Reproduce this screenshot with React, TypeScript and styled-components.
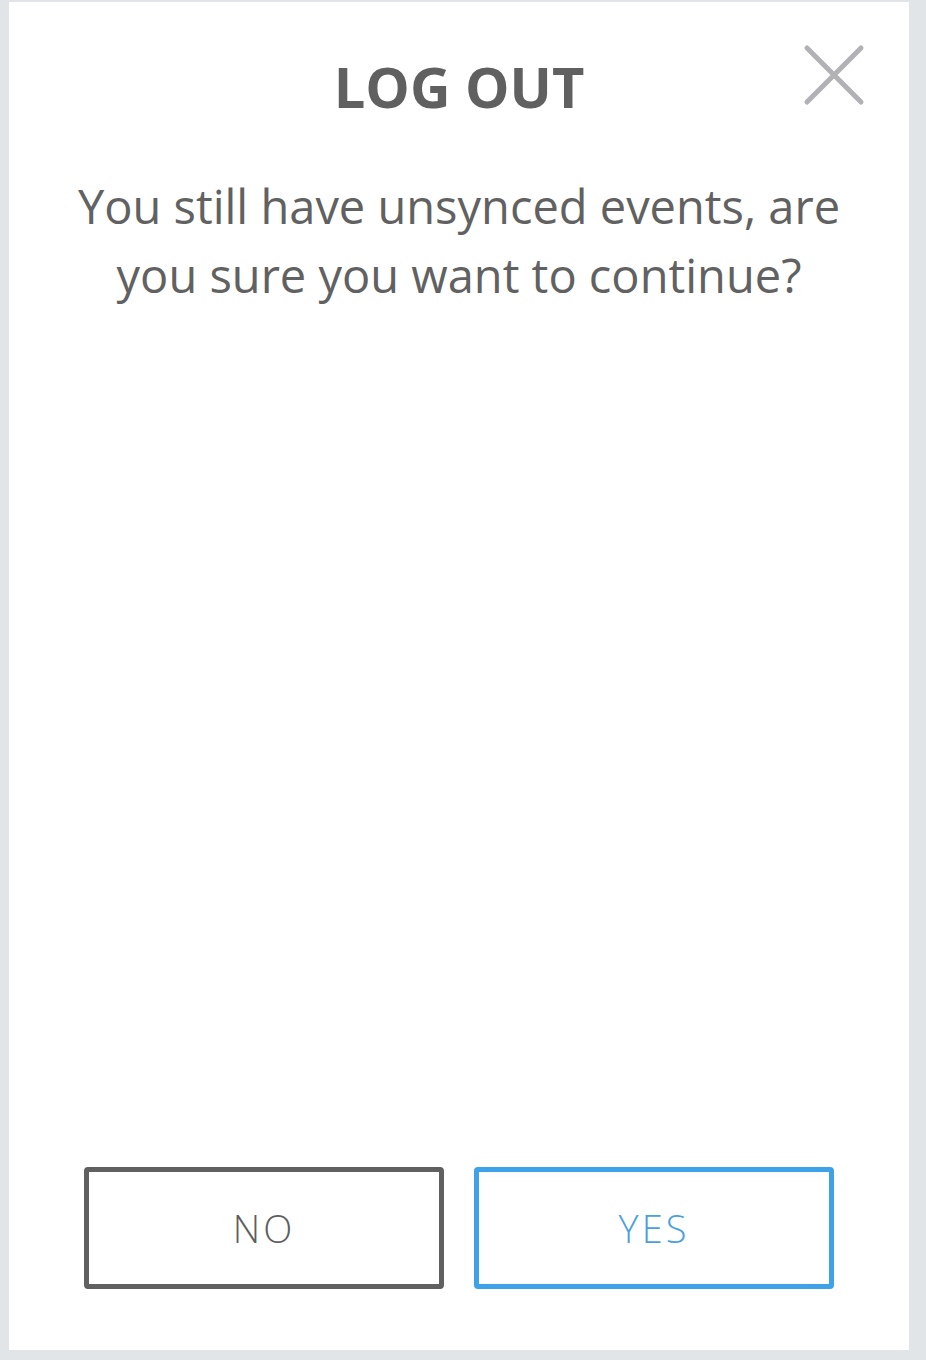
import React from "react";
import styled, { createGlobalStyle } from "styled-components";

const Global = createGlobalStyle`
  html, body { margin: 0; padding: 0; background: #e2e5e8; }
  body { font-family: "Open Sans", "Noto Sans", sans-serif; }
`;

const Screen = styled.div`
  width: 926px;
  height: 1360px;
  box-sizing: border-box;
  padding: 2px 17px 10px 9px;
  display: flex;
`;

const Panel = styled.div`
  flex: 1;
  background: #ffffff;
  display: flex;
  flex-direction: column;
  position: relative;
`;

const Header = styled.div`
  height: 170px;
  display: flex;
  justify-content: center;
  align-items: flex-start;
  padding-top: 46px;
  box-sizing: border-box;
`;

const Title = styled.h1`
  margin: 0;
  font-size: 56px;
  font-weight: 700;
  color: #606060;
  line-height: 76px;
`;

const Close = styled.button`
  position: absolute;
  top: 41px;
  right: 43px;
  width: 64px;
  height: 64px;
  padding: 0;
  border: none;
  background: transparent;
  display: flex;
  align-items: center;
  justify-content: center;
`;

const Message = styled.p`
  margin: 0;
  flex: 1;
  padding: 0 36px;
  text-align: center;
  font-size: 47px;
  line-height: 69px;
  color: #616161;
`;

const Actions = styled.div`
  display: grid;
  grid-template-columns: 1fr 1fr;
  gap: 30px;
  padding: 0 75px 61px;
`;

const ActionButton = styled.button<{ $primary?: boolean }>`
  height: 122px;
  box-sizing: border-box;
  background: #fff;
  border: 5px solid ${(p) => (p.$primary ? "#3ea2e8" : "#606060")};
  border-radius: 4px;
  color: ${(p) => (p.$primary ? "#4a9fe0" : "#5e5e5e")};
  font-family: "Open Sans", sans-serif;
  font-size: 38px;
  font-weight: 300;
  letter-spacing: 3px;
  padding: 0;
`;

export default function App() {
  return (
    <>
      <Global />
      <Screen>
        <Panel>
          <Header>
            <Title>LOG OUT</Title>
          </Header>
          <Close aria-label="Close">
            <svg width="64" height="64" viewBox="0 0 64 64">
              <path
                d="M5 5 L59 59 M59 5 L5 59"
                stroke="#b1b1b6"
                strokeWidth="5"
                strokeLinecap="round"
              />
            </svg>
          </Close>
          <Message>
            You still have unsynced events, are you sure you want to continue?
          </Message>
          <Actions>
            <ActionButton>NO</ActionButton>
            <ActionButton $primary>YES</ActionButton>
          </Actions>
        </Panel>
      </Screen>
    </>
  );
}
